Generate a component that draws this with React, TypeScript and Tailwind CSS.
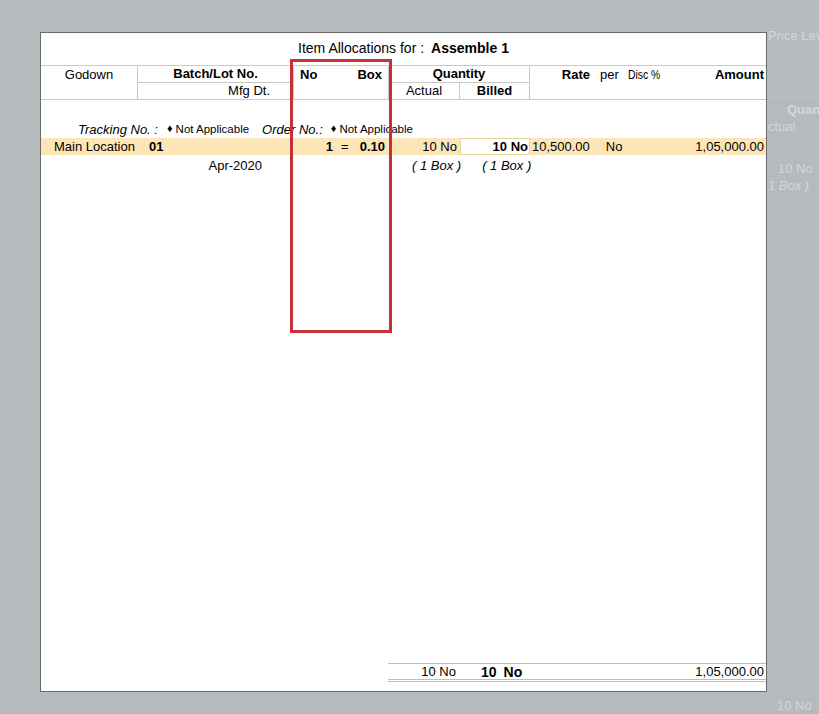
import React from "react";

const font = { fontFamily: '"Liberation Sans", Arial, sans-serif' };

function Ghost() {
  // faded voucher screen behind the allocation window
  return (
    <div className="absolute inset-0 text-[13px] text-[#d3d7d8] whitespace-nowrap">
      <div className="absolute left-[768px] top-[26px]">Price Lev</div>
      <div className="absolute left-[766px] top-[97px] w-[60px] border-t border-[#bfc4c5]" />
      <div className="absolute left-[787px] top-[100px] font-bold">Quan</div>
      <div className="absolute left-[768px] top-[117px]">ctual</div>
      <div className="absolute left-[778px] top-[159px]">10 No</div>
      <div className="absolute left-[768px] top-[176px] italic">1 Box )</div>
      <div className="absolute left-[777px] top-[696px]">10 No</div>
    </div>
  );
}

function Diamond() {
  return <span className="mr-[3px] text-[11px] relative top-[-1px]">♦</span>;
}

function Header() {
  return (
    <div className="flex h-[34px] border-b border-[#c9c9c9]">
      <div className="w-[97px] border-r border-[#c9c9c9] text-center leading-[17px]">
        Godown
      </div>
      <div className="w-[156px] border-r border-[#c9c9c9] flex flex-col">
        <div className="h-[17px] border-b border-[#c9c9c9] text-center font-bold leading-[16px]">
          Batch/Lot No.
        </div>
        <div className="text-right pr-[23px] leading-[16px]">Mfg Dt.</div>
      </div>
      <div className="w-[95px] border-r border-[#c9c9c9] flex justify-between px-[6px] font-bold leading-[17px]">
        <span>No</span>
        <span>Box</span>
      </div>
      <div className="w-[141px] border-r border-[#c9c9c9] flex flex-col">
        <div className="h-[17px] border-b border-[#c9c9c9] text-center font-bold leading-[16px]">
          Quantity
        </div>
        <div className="flex leading-[16px]">
          <div className="w-[71px] border-r border-[#c9c9c9] text-center">Actual</div>
          <div className="flex-1 text-center font-bold">Billed</div>
        </div>
      </div>
      <div className="flex-1 flex leading-[17px] pr-[2px]">
        <span className="w-[60px] text-right font-bold">Rate</span>
        <span className="ml-[10px]">per</span>
        <span className="ml-[9px] inline-block origin-left scale-x-[0.8]">Disc %</span>
        <span className="flex-1 text-right font-bold">Amount</span>
      </div>
    </div>
  );
}

function Rows() {
  return (
    <div className="pt-[21px]">
      <div className="flex h-[17px] leading-[17px] pl-[37px]">
        <span className="italic">Tracking No. :</span>
        <span className="ml-[9px] text-[11.5px]">
          <Diamond />
          Not Applicable
        </span>
        <span className="italic ml-[13px]">Order No.:</span>
        <span className="ml-[8px] text-[11.5px]">
          <Diamond />
          Not Applicable
        </span>
      </div>

      <div className="flex h-[17px] leading-[17px] bg-[#fce6b8]">
        <div className="w-[97px] pl-[13px] whitespace-nowrap">Main Location</div>
        <div className="w-[156px] pl-[11px] font-bold">01</div>
        <div className="w-[95px] flex justify-end pr-[4px] font-bold">
          <span>1</span>
          <span className="ml-[8px] font-normal">=</span>
          <span className="ml-[11px]">0.10</span>
        </div>
        <div className="w-[71px] text-right pr-[3px]">10 No</div>
        <div className="w-[70px] bg-white border border-[#e6d49e] text-right pr-[1px] font-bold leading-[15px]">
          10 No
        </div>
        <div className="flex-1 flex pr-[2px]">
          <span className="pl-[2px]">10,500.00</span>
          <span className="ml-[16px]">No</span>
          <span className="flex-1 text-right">1,05,000.00</span>
        </div>
      </div>

      <div className="flex h-[17px] leading-[17px] mt-[1px] pt-[1px]">
        <div className="w-[97px]" />
        <div className="w-[156px] text-right pr-[32px]">Apr-2020</div>
        <div className="w-[95px]" />
        <div className="pl-[23px] italic whitespace-nowrap">( 1 Box )</div>
        <div className="pl-[21px] italic whitespace-nowrap">( 1 Box )</div>
      </div>
    </div>
  );
}

function Footer() {
  return (
    <div className="flex mb-[9px]">
      <div className="w-[347px]" />
      <div className="flex-1 border-t border-b-[3px] border-double border-[#bdbdbd] flex h-[19px] leading-[16px]">
        <div className="w-[71px] text-right pr-[3px]">10 No</div>
        <div className="pl-[22px] font-bold text-[14px] flex">
          <span>10</span>
          <span className="ml-[7px]">No</span>
        </div>
        <div className="flex-1 text-right pr-[2px]">1,05,000.00</div>
      </div>
    </div>
  );
}

export default function App() {
  return (
    <div
      className="relative w-[819px] h-[714px] overflow-hidden bg-[#b5bbbc] text-[13px] text-black"
      style={font}
    >
      <Ghost />
      <div className="absolute left-[40px] top-[32px] w-[727px] h-[660px] bg-white border border-[#6a6a6a] flex flex-col">
        <div className="h-[33px] border-b border-[#c9c9c9] flex items-center justify-center pb-[1px] text-[14px]">
          <span>Item Allocations for :</span>
          <span className="ml-[7px] font-bold">Assemble 1</span>
        </div>
        <Header />
        <div className="flex-1">
          <Rows />
        </div>
        <Footer />
      </div>
      {/* highlight box drawn over the No / Box column */}
      <div className="absolute left-[290px] top-[59px] w-[102px] h-[274px] border-[3px] border-[#c5303a]" />
    </div>
  );
}
